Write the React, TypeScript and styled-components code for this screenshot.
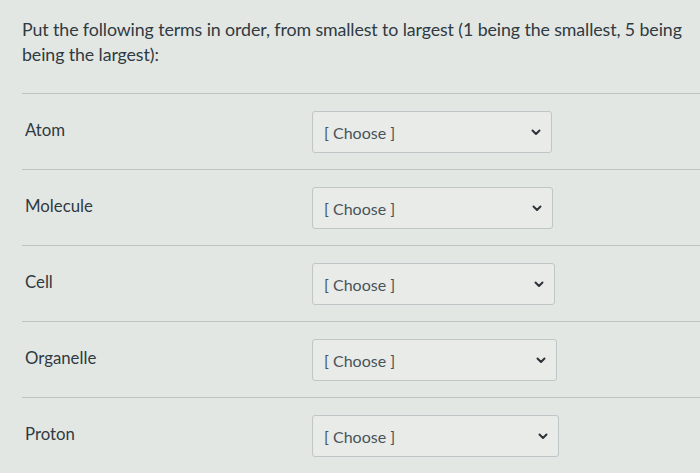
import React from "react";
import styled, { createGlobalStyle } from "styled-components";

const Global = createGlobalStyle`
  html, body { margin: 0; padding: 0; }
  body {
    background: #e3e7e4;
    font-family: Lato, "Noto Sans", sans-serif;
    color: #333d44;
  }
`;

const Page = styled.div`
  width: 700px;
  height: 473px;
  overflow: hidden;
  background: #e3e7e4;
  padding: 17px 0 0 22px;
  box-sizing: border-box;
`;

const Question = styled.p`
  margin: 0;
  padding-right: 8px;
  font-size: 17.8px;
  line-height: 25px;
  color: #2f3a42;
  letter-spacing: -0.1px;
`;

const List = styled.div`
  margin-top: 26px;
  display: flex;
  flex-direction: column;
`;

const Row = styled.div`
  border-top: 1px solid #bcc3c2;
  display: flex;
  align-items: flex-start;
  padding: 17px 0 15px 0;
  height: 43px;
`;

const Label = styled.div`
  width: 290px;
  box-sizing: border-box;
  padding: 8px 0 0 3px;
  font-size: 16.8px;
  line-height: 21px;
  color: #2f3a42;
`;

const Select = styled.div<{ $w: number }>`
  width: ${(p) => p.$w}px;
  height: 42px;
  box-sizing: border-box;
  border: 1px solid #bfc6c7;
  border-radius: 3px;
  background: #e8ebe8;
  display: flex;
  align-items: center;
  justify-content: space-between;
  padding: 0 10px 0 11px;
  font-size: 16px;
  color: #4a5359;
`;

const Chevron = () => (
  <svg width="10" height="7" viewBox="0 0 10 7">
    <path d="M1.5 1.5 L5 5 L8.5 1.5" fill="none" stroke="#2d3438" strokeWidth="2" strokeLinecap="round" strokeLinejoin="round" />
  </svg>
);

const items = [
  { label: "Atom", w: 240 },
  { label: "Molecule", w: 241 },
  { label: "Cell", w: 243 },
  { label: "Organelle", w: 245 },
  { label: "Proton", w: 247 },
];

export default function App() {
  return (
    <>
      <Global />
      <Page>
        <Question>
          Put the following terms in order, from smallest to largest (1 being the smallest, 5 being being the largest):
        </Question>
        <List>
          {items.map((it) => (
            <Row key={it.label}>
              <Label>{it.label}</Label>
              <Select $w={it.w}>
                <span>[ Choose ]</span>
                <Chevron />
              </Select>
            </Row>
          ))}
        </List>
      </Page>
    </>
  );
}
